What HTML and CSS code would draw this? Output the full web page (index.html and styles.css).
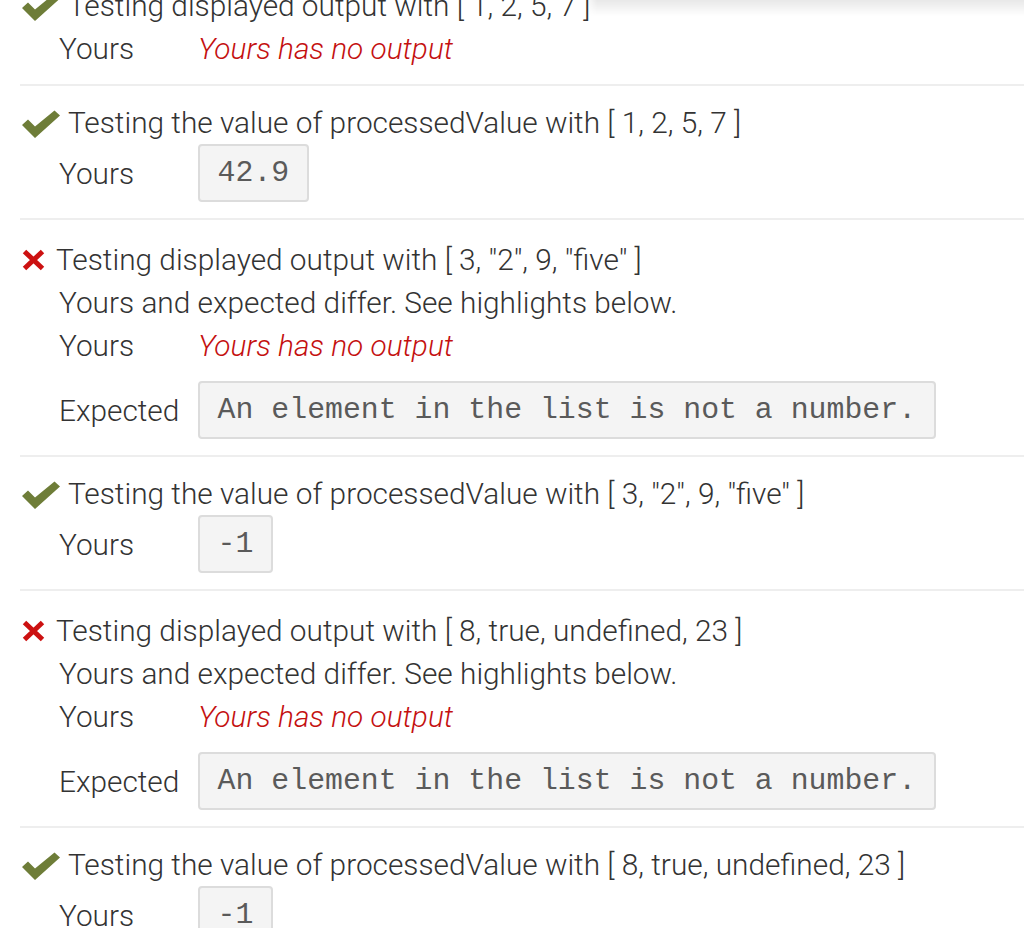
FILE: index.html
```html
<!DOCTYPE html>
<html>
<head>
<meta charset="utf-8">
<link rel="stylesheet" href="styles.css">
</head>
<body>
<div class="top-shadow"></div>
<div class="results">
  <div class="test pass">
    <div class="head"><svg class="icon-check" viewBox="0 0 38 28"><polygon points="0,15 6,9.5 13,16.5 32.5,0.5 38,5.5 13,28"/></svg><span>Testing displayed output with [ 1, 2, 5, 7 ]</span></div>
    <div class="line msg"><span class="label">Yours</span><span class="none">Yours has no output</span></div>
  </div>
  <div class="test pass">
    <div class="head"><svg class="icon-check" viewBox="0 0 38 28"><polygon points="0,15 6,9.5 13,16.5 32.5,0.5 38,5.5 13,28"/></svg><span>Testing the value of processedValue with [ 1, 2, 5, 7 ]</span></div>
    <div class="line box"><span class="label">Yours</span><code class="code">42.9</code></div>
  </div>
  <div class="test fail">
    <div class="head"><svg class="icon-x" viewBox="0 0 23 22"><path d="M2.5 2.5 L20.5 19.5 M20.5 2.5 L2.5 19.5"/></svg><span>Testing displayed output with [ 3, "2", 9, "five" ]</span></div>
    <div class="note">Yours and expected differ. See highlights below.</div>
    <div class="line msg"><span class="label">Yours</span><span class="none">Yours has no output</span></div>
    <div class="line box"><span class="label">Expected</span><code class="code">An element in the list is not a number.</code></div>
  </div>
  <div class="test pass">
    <div class="head"><svg class="icon-check" viewBox="0 0 38 28"><polygon points="0,15 6,9.5 13,16.5 32.5,0.5 38,5.5 13,28"/></svg><span>Testing the value of processedValue with [ 3, "2", 9, "five" ]</span></div>
    <div class="line box"><span class="label">Yours</span><code class="code">-1</code></div>
  </div>
  <div class="test fail">
    <div class="head"><svg class="icon-x" viewBox="0 0 23 22"><path d="M2.5 2.5 L20.5 19.5 M20.5 2.5 L2.5 19.5"/></svg><span>Testing displayed output with [ 8, true, undefined, 23 ]</span></div>
    <div class="note">Yours and expected differ. See highlights below.</div>
    <div class="line msg"><span class="label">Yours</span><span class="none">Yours has no output</span></div>
    <div class="line box"><span class="label">Expected</span><code class="code">An element in the list is not a number.</code></div>
  </div>
  <div class="test pass">
    <div class="head"><svg class="icon-check" viewBox="0 0 38 28"><polygon points="0,15 6,9.5 13,16.5 32.5,0.5 38,5.5 13,28"/></svg><span>Testing the value of processedValue with [ 8, true, undefined, 23 ]</span></div>
    <div class="line box"><span class="label">Yours</span><code class="code">-1</code></div>
  </div>
</div>
</body>
</html>
```
FILE: styles.css
```css
html, body {
  margin: 0;
  padding: 0;
  background: #fff;
  overflow: hidden;
}
body {
  font-family: Roboto, "Liberation Sans", sans-serif;
  font-size: 29.8px;
  font-weight: 300;
  color: #333333;
}
.top-shadow {
  position: absolute;
  top: 0;
  left: 585px;
  right: 0;
  height: 16px;
  background: linear-gradient(to bottom, rgba(0,0,0,0.09), rgba(0,0,0,0));
  -webkit-mask-image: linear-gradient(to right, transparent, #000 12px);
  mask-image: linear-gradient(to right, transparent, #000 12px);
  z-index: 2;
}
.results {
  margin-top: -31px;
  padding-left: 20px;
}
.test {
  border-bottom: 2px solid #eeeeee;
  padding-top: 15px;
}
.test.fail {
  padding-top: 18px;
}
.head {
  display: flex;
  align-items: center;
  height: 43px;
  padding-left: 2px;
  white-space: nowrap;
}
.icon-check {
  flex: none;
  width: 38px;
  height: 28px;
  fill: #6e7d38;
  margin-right: 8px;
  margin-top: 2px;
}
.icon-x {
  flex: none;
  width: 23px;
  height: 22px;
  stroke: #cc1111;
  stroke-width: 5;
  fill: none;
  margin-right: 11px;
}
.note {
  padding-left: 39px;
  line-height: 43px;
  white-space: nowrap;
}
.line {
  display: grid;
  grid-template-columns: 139px auto;
  align-items: center;
  padding-left: 39px;
}
.line.msg {
  height: 43px;
  margin-bottom: 14px;
}
.line.box {
  margin-bottom: 16px;
}
.none {
  color: #c41010;
  font-style: italic;
}
.code {
  justify-self: start;
  box-sizing: border-box;
  height: 58px;
  display: flex;
  align-items: center;
  padding: 0 17.6px;
  background: #f4f4f4;
  border: 2px solid #dcdcdc;
  border-radius: 4px;
  font-family: "Liberation Mono", "Courier New", monospace;
  font-size: 29.85px;
  color: #5a5a5a;
  white-space: pre;
}
```
